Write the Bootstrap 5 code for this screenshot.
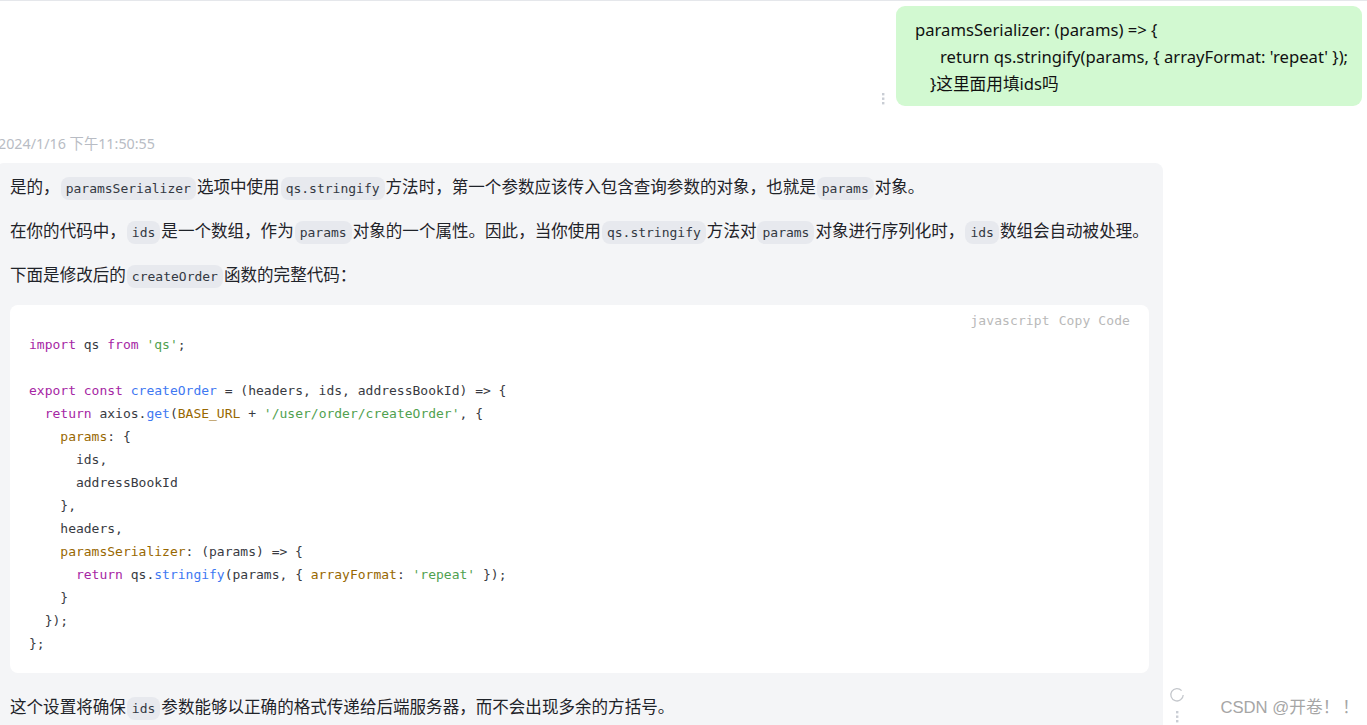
<!doctype html>
<html lang="zh">
<head>
<meta charset="utf-8">
<title>Chat</title>
<link href="https://cdn.jsdelivr.net/npm/bootstrap@5.3.0/dist/css/bootstrap.min.css" rel="stylesheet">
<style>
html,body{height:725px;overflow:hidden;background:#fff}
body{font-family:"Noto Sans","Noto Sans CJK SC",sans-serif;color:#1f2329;font-size:16.56px}
.chat-page{border-top:1px solid #e5e7eb;padding-top:5px;height:725px;overflow:hidden;position:relative}
.user-row{padding-right:5px;gap:9px;height:100px}
.msg-tools{width:8px;padding-bottom:1px;color:#c9cdd4}
.user-bubble{width:466px;height:100px;background:#d2f9d1;border-radius:9px;padding:10px 0 0 19px;font-size:16.65px;line-height:27px;white-space:nowrap;color:#111}
.line-two{padding-left:25px}
.line-three{padding-left:15px}
.stamp{margin:28px 0 0 -2px;height:20px;line-height:20px;font-size:14.3px;color:#b8bcc4}
.ai-wrap{margin:9px 0 0 -4px;width:1167px}
.ai-bubble{background:#f4f5f7;border-radius:8px;padding:10px 14px 0;height:600px}
.ai-bubble p{margin:0 0 16px;line-height:28px;white-space:nowrap}
code.inline-code{font-family:"DejaVu Sans Mono",monospace;font-size:13px;line-height:1;color:#333842;background:#e7e9ee;border-radius:8px;padding:4px 5px;margin:0 1px}
.code-box{background:#fff;border-radius:8px;width:1139px;height:368px;margin-bottom:20px;padding:4px 19px 0}
.code-head{height:24px;line-height:24px;gap:9px;font-family:"DejaVu Sans Mono",monospace;font-size:13px;letter-spacing:.1px;color:#b9b9b9}
.code-box pre{margin:0;font-family:"DejaVu Sans Mono",monospace;font-size:13px;line-height:23px;color:#383a42;overflow:hidden}
.kw{color:#a626a4}.st{color:#50a14f}.fn{color:#4078f2}.at{color:#986801}
.side-tools{left:1169px;top:686px;width:16px}
.wm{right:5px;top:695px;font-family:"Liberation Sans","Noto Sans CJK TC",sans-serif;font-size:16.7px;color:#a6a6a6;line-height:24px}
.wm-bang{letter-spacing:3px}
</style>
</head>
<body>
<div class="chat-page">
  <div class="d-flex justify-content-end align-items-end user-row">
    <div class="msg-tools d-flex justify-content-center">
      <svg width="4" height="12" viewBox="0 0 4 12"><g fill="#c9cdd4"><rect x="1" y="0" width="2.4" height="2.4"/><rect x="1" y="4.5" width="2.4" height="2.4"/><rect x="1" y="9" width="2.4" height="2.4"/></g></svg>
    </div>
    <div class="user-bubble">
      <div>paramsSerializer: (params) =&gt; {</div>
      <div class="line-two">return qs.stringify(params, { arrayFormat: 'repeat' });</div>
      <div class="line-three">}这里面用填ids吗</div>
    </div>
  </div>
  <div class="stamp">2024/1/16 下午11:50:55</div>
  <div class="ai-wrap">
    <div class="ai-bubble">
      <p>是的，<code class="inline-code">paramsSerializer</code>选项中使用<code class="inline-code">qs.stringify</code>方法时，第一个参数应该传入包含查询参数的对象，也就是<code class="inline-code">params</code>对象。</p>
      <p>在你的代码中，<code class="inline-code">ids</code>是一个数组，作为<code class="inline-code">params</code>对象的一个属性。因此，当你使用<code class="inline-code">qs.stringify</code>方法对<code class="inline-code">params</code>对象进行序列化时，<code class="inline-code">ids</code>数组会自动被处理。</p>
      <p>下面是修改后的<code class="inline-code">createOrder</code>函数的完整代码：</p>
      <div class="code-box">
        <div class="code-head d-flex justify-content-end"><span>javascript</span><span>Copy Code</span></div>
<pre><span class="kw">import</span> qs <span class="kw">from</span> <span class="st">'qs'</span>;

<span class="kw">export</span> <span class="kw">const</span> <span class="fn">createOrder</span> = (headers, ids, addressBookId) =&gt; {
  <span class="kw">return</span> axios.<span class="fn">get</span>(<span class="at">BASE_URL</span> + <span class="st">'/user/order/createOrder'</span>, {
    <span class="at">params</span>: {
      ids,
      addressBookId
    },
    headers,
    <span class="at">paramsSerializer</span>: (params) =&gt; {
      <span class="kw">return</span> qs.<span class="fn">stringify</span>(params, { <span class="at">arrayFormat</span>: <span class="st">'repeat'</span> });
    }
  });
};</pre>
      </div>
      <p>这个设置将确保<code class="inline-code">ids</code>参数能够以正确的格式传递给后端服务器，而不会出现多余的方括号。</p>
    </div>
  </div>
  <div class="side-tools position-absolute d-flex flex-column align-items-center">
    <svg width="16" height="16" viewBox="0 0 16 16" fill="none" stroke="#c4c7cc" stroke-width="1.3"><path d="M12.6 3.6A6.2 6.2 0 1 0 14.2 8"/></svg>
    <svg class="mt-2" width="4" height="12" viewBox="0 0 4 12"><g fill="#c9cdd4"><rect x="1" y="0" width="2.4" height="2.4"/><rect x="1" y="4.5" width="2.4" height="2.4"/><rect x="1" y="9" width="2.4" height="2.4"/></g></svg>
  </div>
  <div class="wm position-absolute">CSDN @开卷<span class="wm-bang">！！</span></div>
</div>
<script src="https://cdn.jsdelivr.net/npm/bootstrap@5.3.0/dist/js/bootstrap.bundle.min.js"></script>
</body>
</html>
